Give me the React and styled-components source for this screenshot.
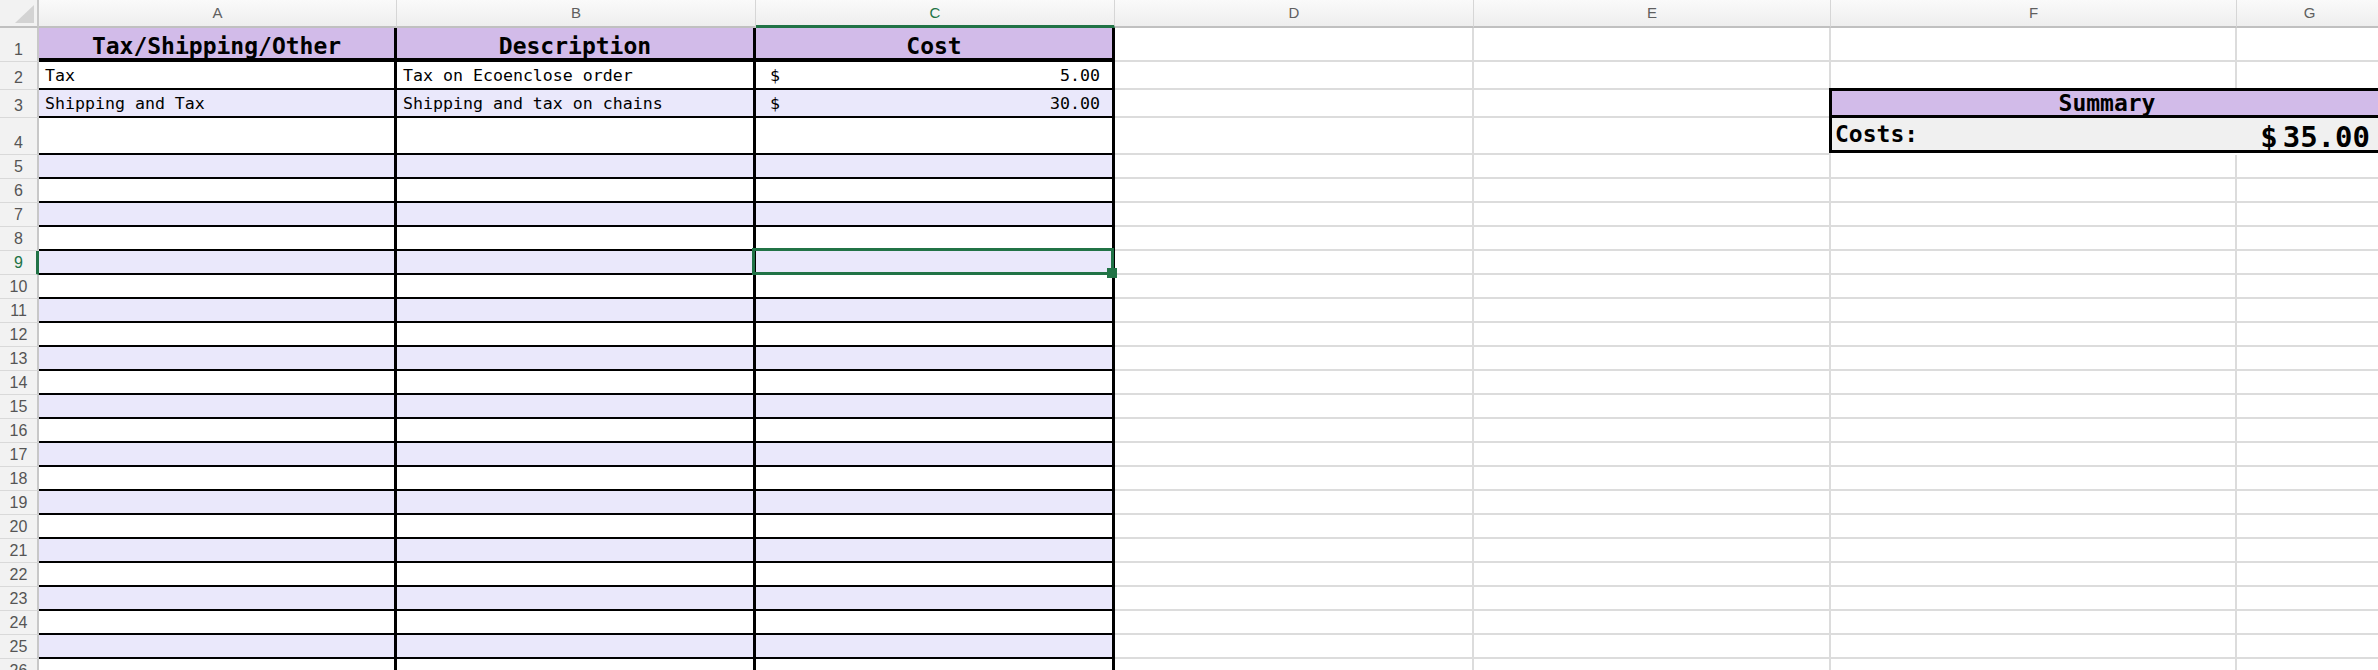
import React from "react";
import styled, { createGlobalStyle } from "styled-components";

const GlobalStyle = createGlobalStyle`
  html, body {
    margin: 0;
    padding: 0;
    background: #ffffff;
    overflow: hidden;
  }
  #root {
    width: 2378px;
    height: 670px;
    overflow: hidden;
  }
`;

const COLUMNS = ["A", "B", "C", "D", "E", "F", "G"];
const COL_WIDTHS = [358, 359, 359, 359, 357, 406, 146];
const ROW_HEIGHTS = [34, 28, 28, 37, ...Array(22).fill(24)]; // rows 1..26

const GREEN = "#217346";
const GRID = "#dcdcdc";
const MONO = `"DejaVu Sans Mono", "Liberation Mono", monospace`;
const SANS = `"Liberation Sans", Arial, sans-serif`;

const rows = [
  { a: "Tax", b: "Tax on Ecoenclose order", cost: "5.00" },
  { a: "Shipping and Tax", b: "Shipping and tax on chains", cost: "30.00" },
];

const Sheet = styled.div`
  display: grid;
  grid-template-columns: 39px ${COL_WIDTHS.map((w) => `${w}px`).join(" ")};
  grid-template-rows: 28px ${ROW_HEIGHTS.map((h) => `${h}px`).join(" ")};
  width: 2378px;
  height: 670px;
  overflow: hidden;
  font-family: ${MONO};
  color: #000;
`;

const Corner = styled.div`
  box-sizing: border-box;
  background: #f2f2f2;
  border-right: 2px solid #c8c8c8;
  border-bottom: 2px solid #c0c0c0;
  display: flex;
`;

const ColHead = styled.div`
  box-sizing: border-box;
  background: linear-gradient(#fafafa, #eeeeee);
  border-right: 1px solid #d6d6d6;
  border-bottom: ${({ $active }) => ($active ? `3px solid ${GREEN}` : "2px solid #c0c0c0")};
  display: flex;
  align-items: center;
  justify-content: center;
  padding-bottom: ${({ $active }) => ($active ? "1px" : "2px")};
  font-family: ${SANS};
  font-size: 15px;
  color: ${({ $active }) => ($active ? GREEN : "#5f5f5f")};
`;

const RowHead = styled.div`
  box-sizing: border-box;
  background: #f2f2f2;
  border-right: ${({ $active }) => ($active ? `3px solid ${GREEN}` : "2px solid #c8c8c8")};
  border-bottom: 1px solid #d9d9d9;
  display: flex;
  align-items: flex-end;
  justify-content: center;
  padding-bottom: 3px;
  padding-left: ${({ $active }) => ($active ? "1px" : "0")};
  font-family: ${SANS};
  font-size: 16px;
  line-height: 16px;
  color: ${({ $active }) => ($active ? GREEN : "#555555")};
`;

const toneBg = {
  header: "#d2bbe9",
  alt: "#eae8fb",
  white: "#ffffff",
};

const Cell = styled.div`
  box-sizing: border-box;
  position: ${({ $selected }) => ($selected ? "relative" : "static")};
  z-index: ${({ $selected }) => ($selected ? 2 : "auto")};
  display: flex;
  align-items: flex-end;
  min-width: 0;
  background: ${({ $tone }) => toneBg[$tone] || "#fff"};
  border-right: ${({ $table }) => ($table ? "3px solid #000" : `2px solid ${GRID}`)};
  border-bottom: ${({ $table, $heavy }) =>
    $heavy ? "4px solid #000" : $table ? "2px solid #000" : `2px solid ${GRID}`};
  padding: 0 6px 3.5px;
  font-size: 16.6px;
  line-height: 1;
  white-space: nowrap;

  &::after {
    content: ${({ $selected }) => ($selected ? '""' : "none")};
    position: absolute;
    top: -3px;
    left: -4px;
    right: -2px;
    bottom: -2px;
    border: 3px solid ${GREEN};
  }

  &::before {
    content: ${({ $selected }) => ($selected ? '""' : "none")};
    position: absolute;
    right: -5px;
    bottom: -5px;
    width: 10px;
    height: 10px;
    background: ${GREEN};
    z-index: 3;
  }
`;

const HeaderCell = styled(Cell)`
  justify-content: center;
  padding: 0;
  font-size: 23px;
  font-weight: bold;
`;

const CostCell = styled(Cell)`
  justify-content: space-between;
  padding: 0 12px 3.5px 14px;
`;

const SummaryBox = styled.div`
  grid-column: 7 / span 2;
  grid-row: 4 / span 2;
  align-self: start;
  box-sizing: border-box;
  height: 65px;
  margin: -2px 0 0 -2px;
  border: 3px solid #000;
  display: grid;
  grid-template-rows: 27px 1fr;
  background: #f0f0f0;
  position: relative;
  z-index: 1;
`;

const SummaryTitle = styled.div`
  box-sizing: border-box;
  background: #d2bbe9;
  border-bottom: 3px solid #000;
  display: flex;
  align-items: flex-end;
  justify-content: center;
  font-size: 23px;
  line-height: 1;
  font-weight: bold;
  padding-left: 2px;
`;

const SummaryRow = styled.div`
  display: flex;
  align-items: flex-end;
  justify-content: space-between;
  padding: 0 10px 0 3px;
  font-weight: bold;
`;

const SummaryLabel = styled.span`
  font-size: 23px;
  line-height: 1;
  padding-bottom: 4.5px;
`;

const SummaryValue = styled.span`
  display: flex;
  gap: 5px;
  font-size: 29px;
  line-height: 26px;
`;

const CornerMark = () => (
  <svg width="37" height="26" viewBox="0 0 37 26">
    <polygon points="15,23 34,23 34,5" fill="#d3d3d3" />
  </svg>
);

function tableTone(row) {
  if (row === 1) return "header";
  return row % 2 === 1 ? "alt" : "white";
}

export default function App() {
  const selRow = 9;
  const selCol = 2; // C
  const cells = [];

  cells.push(
    <Corner key="corner">
      <CornerMark />
    </Corner>
  );
  COLUMNS.forEach((c, i) => {
    cells.push(
      <ColHead key={`h-${c}`} $active={i === selCol}>
        {c}
      </ColHead>
    );
  });

  ROW_HEIGHTS.forEach((_, idx) => {
    const r = idx + 1;
    cells.push(
      <RowHead key={`r-${r}`} $active={r === selRow}>
        {r}
      </RowHead>
    );
    const tone = tableTone(r);
    const data = rows[r - 2];

    COLUMNS.forEach((c, ci) => {
      const key = `${c}${r}`;
      // summary box covers F3:G4
      if ((r === 3 || r === 4) && ci >= 5) return;

      if (ci > 2) {
        cells.push(<Cell key={key} />);
        return;
      }

      const selected = r === selRow && ci === selCol;

      if (r === 1) {
        const titles = ["Tax/Shipping/Other", "Description", "Cost"];
        cells.push(
          <HeaderCell key={key} $table $heavy $tone="header">
            {titles[ci]}
          </HeaderCell>
        );
        return;
      }

      if (ci === 2 && data) {
        cells.push(
          <CostCell key={key} $table $tone={tone}>
            <span>$</span>
            <span>{data.cost}</span>
          </CostCell>
        );
        return;
      }

      cells.push(
        <Cell key={key} $table $tone={tone} $selected={selected}>
          {data ? (ci === 0 ? data.a : data.b) : null}
        </Cell>
      );
    });
  });

  return (
    <>
      <GlobalStyle />
      <Sheet>
        {cells}
        <SummaryBox>
          <SummaryTitle>Summary</SummaryTitle>
          <SummaryRow>
            <SummaryLabel>Costs:</SummaryLabel>
            <SummaryValue>
              <span>$</span>
              <span>35.00</span>
            </SummaryValue>
          </SummaryRow>
        </SummaryBox>
      </Sheet>
    </>
  );
}
